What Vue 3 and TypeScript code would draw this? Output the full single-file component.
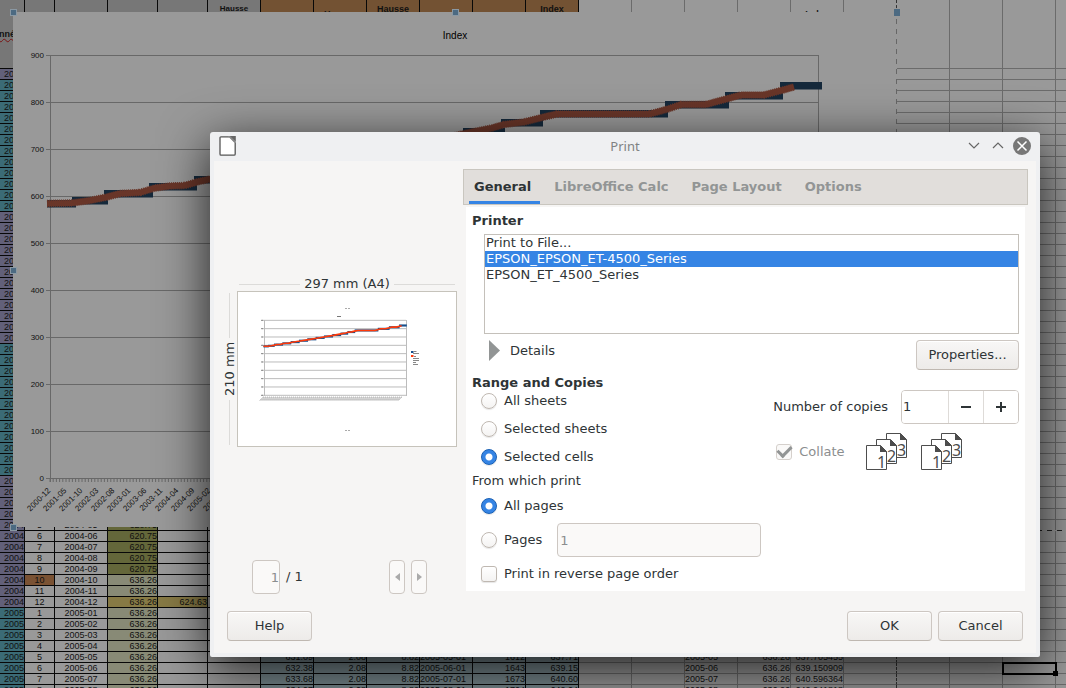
<script setup lang="ts">
import { ref } from 'vue'

interface Cell {
  text: string
  cls: string
}

const ROW_COUNT = 57
const COLUMN_COUNT = 22
const FIRST_ROW_BELOW_CHART = 41
const columnWidths = [25, 30, 53, 50, 50, ...Array(17).fill(53)]

const details: Record<number, string[]> = {
  53: ['631.09', '2.08', '8.82', '2005-05-01', '1612', '637.71', '', '', '2005-05', '636.26', '637.705455'],
  54: ['632.38', '2.08', '8.82', '2005-06-01', '1643', '639.15', '', '', '2005-06', '636.26', '639.150909'],
  55: ['633.68', '2.08', '8.82', '2005-07-01', '1673', '640.60', '', '', '2005-07', '636.26', '640.596364'],
  56: ['634.97', '2.08', '8.82', '2005-08-01', '1704', '642.04', '', '', '2005-08', '636.26', '642.041818'],
}

function buildCell(row: number, col: number): Cell {
  const absolute = 2000 * 12 + 11 + row
  const year = Math.floor(absolute / 12)
  const month = (absolute % 12) + 1
  const edge = col < 12 ? 'ruled' : col === 17 ? 'page-end' : ''
  let text = ''
  let cls = ''
  if (col === 0) {
    text = String(year)
    cls = year % 2 ? 'teal' : 'violet'
  } else if (col === 1) {
    text = String(month)
    cls = row === 46 ? 'center brown' : 'center'
  } else if (col === 2) {
    text = `${year}-${String(month).padStart(2, '0')}`
    cls = 'center'
  } else if (col === 3) {
    text = row > 45 ? '636.26' : '620.75'
    cls = row === 48 ? 'gold' : row > 45 ? 'sage' : 'olive'
  } else if (col === 4 && row === 48) {
    text = '624.63'
    cls = 'gold'
  } else if (col > 5) {
    text = details[row]?.[col - 6] ?? ''
    cls = col < 12 ? 'slate' : ''
    if (col === 9 || col === 14) cls += ' left'
    if (row === 54 && col === 20) cls = 'cursor'
  }
  if (col > 0 && row < FIRST_ROW_BELOW_CHART) text = ''
  return { text, cls: `${edge} ${cls}` }
}

const rows: Cell[][] = Array.from({ length: ROW_COUNT }, (_, r) =>
  Array.from({ length: COLUMN_COUNT }, (_, c) => buildCell(r, c)),
)

const headings: Record<number, string> = { 0: 'Année', 5: 'Hausse', 7: 'Hausse', 8: 'Hausse', 11: 'Index', 16: 'Index' }
const headerCells: Cell[] = Array.from({ length: COLUMN_COUNT }, (_, c) => ({
  text: headings[c] ?? '',
  cls: [
    c < 12 ? 'ruled' : c === 17 ? 'page-end' : '',
    c < 6 ? 'gray' : c < 12 ? 'copper' : '',
    c === 0 ? 'low' : '',
    c === 7 || c === 16 ? 'drop' : '',
    c === 5 ? 'small' : '',
  ].join(' '),
}))

const levels = Array.from({ length: 10 }, (_, i) => ({ value: i * 100, y: 478 - i * 47 }))
const ticks = Array.from({ length: 241 }, (_, i) => 50 + i * 3.2)
const months = Array.from({ length: 12 }, (_, i) => {
  const m = 2000 * 12 + 11 + i * 5
  return { x: 51 + i * 16, text: `${Math.floor(m / 12)}-${String((m % 12) + 1).padStart(2, '0')}` }
})

const steps: [number, number, number][] = [
  [47, 76, 204], [72, 108, 201], [104, 153, 194], [149, 197, 187], [194, 243, 180],
  [239, 288, 172], [284, 333, 164], [329, 378, 156], [374, 423, 148], [419, 467, 140],
  [463, 505, 132], [501, 543, 123], [540, 668, 114], [665, 729, 105], [725, 783, 96], [780, 822, 86],
]
const trend =
  'M47 203.5 L72 203 L90 200.5 L107 197 L120 193.5 L140 192.5 L155 188 L170 186 L185 185.5 L197 182 L210 179 L245 174 L290 166 L335 158 L380 150 L425 142 L472 132 L492 128 L504 124.500 L524 122 L546 116.500 L557 114 L650 114 L668 109 L681 104.500 L706 104.500 L728 98.500 L741 95 L764 95 L783 90 L794 87'

const tabs = ['General', 'LibreOffice Calc', 'Page Layout', 'Options']
const activeTab = ref('General')
const printers = ['Print to File...', 'EPSON_EPSON_ET-4500_Series', 'EPSON_ET_4500_Series']
const printer = ref(printers[1])
const range = ref('cells')
const pages = ref('all')
const reverse = ref(false)
const copies = ref(1)
const collateIcons = [0, 1]
const sheets = [
  { x: 20, y: 0, n: 3 },
  { x: 10, y: 6, n: 2 },
  { x: 0, y: 12, n: 1 },
]
</script>

<template>
  <div class="desktop">
    <div class="sheet">
      <table class="grid">
        <colgroup>
          <col v-for="(w, i) in columnWidths" :key="i" :style="{ width: w + 'px' }" />
        </colgroup>
        <thead>
          <tr>
            <th v-for="(h, i) in headerCells" :key="i" :class="h.cls"><span>{{ h.text }}</span></th>
          </tr>
        </thead>
        <tbody>
          <tr v-for="(row, r) in rows" :key="r">
            <td v-for="(cell, c) in row" :key="c" :class="cell.cls">{{ cell.text }}</td>
          </tr>
        </tbody>
      </table>
      <div class="break-row"></div>
      <svg class="chart" width="892" height="524" viewBox="9 8 892 524">
        <rect x="13" y="12" width="884" height="515" fill="#999" />
        <text x="455" y="39" class="chart-title">Index</text>
        <g stroke="#686868">
          <line v-for="l in levels" :key="l.value" x1="46" x2="818" :y1="l.y + 0.5" :y2="l.y + 0.5" />
          <line x1="50.500" x2="50.500" y1="55" y2="482" />
          <line x1="818.500" x2="818.500" y1="55" y2="478" />
          <line v-for="t in ticks" :key="t" :x1="t" :x2="t" y1="478" y2="482" />
        </g>
        <text v-for="l in levels" :key="l.value" x="44" :y="l.y + 3" class="level">{{ l.value }}</text>
        <text
          v-for="m in months"
          :key="m.text"
          class="level"
          :transform="`translate(${m.x} 491) rotate(-45)`"
        >{{ m.text }}</text>
        <rect v-for="s in steps" :key="s[0]" :x="s[0]" :y="s[2] - 4" :width="s[1] - s[0]" height="7.500" fill="#15293b" />
        <path :d="trend" fill="none" stroke="#693629" stroke-width="6" />
        <path :d="trend" fill="none" stroke="#693629" stroke-width="7.500" stroke-dasharray="1 1" />
        <line x1="896.500" x2="896.500" y1="19" y2="527" stroke="#666" stroke-dasharray="5 5" />
        <g fill="#4c6a82" stroke="#8a98a3">
          <rect x="10.500" y="9.500" width="6" height="6" />
          <rect x="452.500" y="9.500" width="6" height="6" />
          <rect x="894" y="9" width="6" height="7" stroke="none" />
          <rect x="10.500" y="267.500" width="6" height="6" />
          <rect x="10.500" y="524.500" width="6" height="6" />
        </g>
      </svg>
    </div>

    <section class="dialog" role="dialog" aria-label="Print">
      <header class="titlebar">
        <svg width="18" height="20" viewBox="0 0 18 20">
          <path d="M1 2 Q1 .8 2 .8 H10.500 L16.200 6.500 V18 Q16.200 19.200 15 19.200 H2 Q1 19.200 1 18Z" fill="#fff" stroke="#555" stroke-width="1.300" />
          <path d="M10.500 0 H16.800 V6Z" fill="#666" />
          <path d="M10 .5 L16.500 7" stroke="#aaa" />
        </svg>
        <h1>Print</h1>
        <div class="window-buttons">
          <button aria-label="Minimize"><svg width="12" height="8" viewBox="0 0 12 8"><path d="M1 1 L6 6 L11 1" /></svg></button>
          <button aria-label="Maximize"><svg width="12" height="8" viewBox="0 0 12 8"><path d="M1 6 L6 1 L11 6" /></svg></button>
          <button aria-label="Close">
            <svg width="18" height="18" viewBox="0 0 18 18"><circle cx="9" cy="9" r="9" fill="#777" /><path class="cross" d="M4.500 4.500 L13.500 13.500 M13.500 4.500 L4.500 13.500" /></svg>
          </button>
        </div>
      </header>

      <div class="body">
        <div class="main">
          <aside class="preview-pane">
            <div class="preview">
              <div class="measure across"><i></i><span>297 mm (A4)</span><i></i></div>
              <div class="measure down"><i></i><span>210 mm</span><i></i></div>
              <svg class="paper" viewBox="238 292 218 154">
                <g stroke="#bcbcbc">
                  <line v-for="i in 10" :key="i" x1="262" x2="406" :y1="312 + i * 8.33" :y2="312 + i * 8.33" />
                  <line x1="264.500" x2="264.500" y1="320" y2="396" />
                  <line x1="406.500" x2="406.500" y1="320" y2="396" />
                </g>
                <line v-for="i in 10" :key="i" x1="261" x2="263" :y1="312 + i * 8.33" :y2="312 + i * 8.33" stroke="#888" />
                <g transform="translate(264 320) scale(.185 .177) translate(-50 -55)">
                  <rect v-for="s in steps" :key="s[0]" :x="s[0]" :y="s[2] - 6" :width="s[1] - s[0]" height="12" fill="#164f8c" />
                  <path :d="trend" fill="none" stroke="#ff3a0a" stroke-width="9" />
                </g>
                <path v-for="i in 35" :key="i" :d="`M${256 + i * 4} 400.500 l4 -4 m-2 4 l4 -4`" stroke="#666" stroke-width=".8" stroke-dasharray="2 .5" />
                <path d="M345 308.500 h5 M345 430.500 h5" stroke="#aaa" stroke-width="1" stroke-dasharray="2 1" />
                <path d="M337 316.500 h4" stroke="#777" />
                <path d="M411 352 h2.500" stroke="#164f8c" stroke-width="2" />
                <path d="M411 356 h2.500" stroke="#ff3a0a" stroke-width="2" />
                <path d="M413.500 351.500 h3 M413 353.500 h6 M414 356.500 h2 M413 358.500 h6 M413 360.500 h6 M413 362.500 h3 M413 364.500 h5" stroke="#888" />
              </svg>
            </div>
            <div class="pager">
              <input type="text" value="1" aria-label="Current page" disabled />
              <span>/ 1</span>
              <div class="pager-buttons">
                <button disabled aria-label="Previous page"><svg width="5" height="8" viewBox="0 0 5 8"><path d="M5 0 V8 L0 4Z" /></svg></button>
                <button disabled aria-label="Next page"><svg width="5" height="8" viewBox="0 0 5 8"><path d="M0 0 V8 L5 4Z" /></svg></button>
              </div>
            </div>
          </aside>

          <div class="notebook">
            <nav role="tablist">
              <button
                v-for="tab in tabs"
                :key="tab"
                role="tab"
                :aria-selected="activeTab === tab"
                :class="{ active: activeTab === tab }"
                @click="activeTab = tab"
              >{{ tab }}</button>
            </nav>
            <div class="page" role="tabpanel">
              <h2>Printer</h2>
              <select v-model="printer" size="6" aria-label="Printer">
                <option v-for="p in printers" :key="p" :value="p">{{ p }}</option>
              </select>
              <div class="details-row">
                <button class="expander"><svg width="11" height="21" viewBox="0 0 11 21"><path d="M0 0 V21 L11 10.500Z" fill="#929595" /></svg>Details</button>
                <button class="push properties">Properties...</button>
              </div>
              <h2 class="range-title">Range and Copies</h2>
              <div class="columns">
                <div class="choices">
                  <label><input v-model="range" type="radio" value="all" />All sheets</label>
                  <label><input v-model="range" type="radio" value="sheets" />Selected sheets</label>
                  <label><input v-model="range" type="radio" value="cells" />Selected cells</label>
                  <p>From which print</p>
                  <label><input v-model="pages" type="radio" value="all" />All pages</label>
                  <div class="pages-row">
                    <label><input v-model="pages" type="radio" value="some" />Pages</label>
                    <input class="entry" type="text" value="1" aria-label="Page range" disabled />
                  </div>
                  <label><input v-model="reverse" type="checkbox" />Print in reverse page order</label>
                </div>
                <div class="copies">
                  <div class="copies-row">
                    <label for="copies">Number of copies</label>
                    <div class="spin">
                      <input id="copies" v-model="copies" type="text" />
                      <button aria-label="Fewer" @click="copies = Math.max(1, copies - 1)"><svg width="10" height="10" viewBox="0 0 10 10"><path d="M0 5 H10" /></svg></button>
                      <button aria-label="More" @click="copies++"><svg width="10" height="10" viewBox="0 0 10 10"><path d="M0 5 H10 M5 0 V10" /></svg></button>
                    </div>
                  </div>
                  <div class="collate-row">
                    <label class="muted"><input type="checkbox" checked disabled />Collate</label>
                    <svg v-for="i in collateIcons" :key="i" width="42" height="38" viewBox="0 0 42 38">
                      <g v-for="s in sheets" :key="s.n" :transform="`translate(${s.x} ${s.y})`">
                        <path d="M.5 .5 H14.500 L20.500 6.500 V24.500 H.5Z" fill="#fff" stroke="#4d4d4d" />
                        <path d="M14 0 V7 H21Z" fill="#4d4d4d" />
                        <text x="11" y="23">{{ s.n }}</text>
                      </g>
                    </svg>
                  </div>
                </div>
              </div>
            </div>
          </div>
        </div>

        <footer>
          <button class="push">Help</button>
          <span class="spacer"></span>
          <button class="push">OK</button>
          <button class="push">Cancel</button>
        </footer>
      </div>
    </section>
  </div>
</template>

<style>
body {
  margin: 0;
}
</style>

<style scoped>
* {
  box-sizing: border-box;
}
.desktop {
  position: relative;
  min-height: 100vh;
  overflow: hidden;
  background: #999;
  font: 13px/20px "DejaVu Sans", sans-serif;
  color: #2e3436;
}
button,
input,
select {
  font: inherit;
  color: inherit;
  margin: 0;
  padding: 0;
}

.sheet {
  position: absolute;
  inset: 0;
  overflow: hidden;
  font-family: "Liberation Sans", Arial, sans-serif;
  color: #111;
}
.grid {
  width: 1109px;
  table-layout: fixed;
  border-collapse: separate;
  border-spacing: 0;
  font-size: 9px;
}
.grid th,
.grid td {
  padding: 0;
  white-space: nowrap;
  border-right: 1px solid #6b6b6b;
  border-bottom: 1px solid #6b6b6b;
}
.grid th {
  height: 69px;
  padding-top: 3px;
  vertical-align: top;
  line-height: 12px;
}
.grid td {
  height: 11px;
  line-height: 10px;
  text-align: right;
}
.grid .ruled {
  border-color: #080808;
}
.grid .page-end {
  border-right-style: dashed;
  border-right-color: #333;
}
.grid .gray {
  background: #777;
}
.grid .copper {
  background: #735233;
}
.grid .small {
  font-size: 8px;
}
.grid .drop {
  padding-top: 8px;
}
.grid .low {
  padding-top: 28px;
}
.grid .low span {
  display: flex;
  justify-content: flex-end;
  padding-right: 4px;
  text-decoration: underline wavy #7a1414 1px;
}
.grid .center {
  text-align: center;
}
.grid .left {
  text-align: left;
}
.grid .teal {
  background: #3b6b76;
}
.grid .violet {
  background: #626079;
}
.grid .brown {
  background: #7a5233;
}
.grid .olive {
  background: #64673a;
}
.grid .sage {
  background: #888a76;
}
.grid .gold {
  background: #877a45;
}
.grid .slate {
  background: #78898e;
}
.grid .cursor {
  position: relative;
  outline: 2px solid #000;
  outline-offset: -1px;
}
.grid .cursor::after {
  content: "";
  position: absolute;
  right: -3px;
  bottom: -3px;
  width: 5px;
  height: 5px;
  background: #000;
}
.break-row {
  position: absolute;
  top: 530px;
  left: 897px;
  right: 0;
  height: 1px;
  background: repeating-linear-gradient(90deg, #222 0 5px, #999 5px 10px);
}
.chart {
  position: absolute;
  left: 9px;
  top: 8px;
}
.chart-title {
  font-size: 10px;
  text-anchor: middle;
  fill: #000;
}
.level {
  font-size: 8px;
  text-anchor: end;
  fill: #111;
}

.dialog {
  position: absolute;
  top: 132px;
  left: 210px;
  right: 26px;
  padding: 0 4px 4px;
  background: #eff0f2;
  border-radius: 3px 3px 2px 2px;
  box-shadow: 0 12px 50px rgba(0, 0, 0, 0.8);
}
.titlebar {
  display: grid;
  grid-template-columns: 80px 1fr 80px;
  align-items: center;
  height: 29px;
  padding: 0 5px 2px;
}
.titlebar h1 {
  margin: 0;
  text-align: center;
  font: 13px/20px "Noto Sans", sans-serif;
  color: #7f8283;
}
.window-buttons {
  display: flex;
  align-items: center;
  justify-content: flex-end;
  gap: 6px;
}
.window-buttons button {
  display: grid;
  place-items: center;
  width: 18px;
  height: 18px;
  border: 0;
  background: none;
}
.window-buttons path {
  fill: none;
  stroke: #666;
  stroke-width: 1.2;
}
.window-buttons .cross {
  stroke: #fff;
  stroke-width: 1.5;
}
.body {
  background: #f6f5f4;
}
.main {
  display: flex;
}

.preview-pane {
  display: flex;
  flex-direction: column;
  justify-content: space-between;
  width: 249px;
  padding-top: 116px;
}
.preview {
  display: grid;
  grid-template-columns: 14px 220px;
  grid-template-rows: 14px 156px;
  padding-left: 9px;
}
.measure {
  display: flex;
  align-items: center;
  gap: 4px;
  line-height: 14px;
}
.measure i {
  flex: 1;
  background: #dcdbd9;
}
.across {
  grid-column: 2;
  padding: 0 2px;
}
.across i {
  height: 1px;
}
.down {
  writing-mode: vertical-rl;
  transform: rotate(180deg);
  padding: 2px 0;
}
.down i {
  width: 1px;
}
.paper {
  width: 100%;
  height: 100%;
  background: #fff;
  border: 1px solid #c6c3bb;
}
.pager {
  display: flex;
  align-items: center;
  gap: 6px;
  height: 34px;
  padding: 0 36px 0 38px;
}
.pager input {
  width: 28px;
  height: 34px;
  text-align: right;
  color: #8b8e8f;
  background: #faf9f8;
  border: 1px solid #cdc7c2;
  border-radius: 4px;
}
.pager-buttons {
  display: flex;
  gap: 6px;
  margin-left: auto;
}
.pager-buttons button {
  display: grid;
  place-items: center;
  width: 16px;
  height: 34px;
  background: #faf9f8;
  border: 1px solid #cdc7c2;
  border-radius: 4px;
}
.pager-buttons path {
  fill: #aaa;
}

.notebook {
  flex: 1;
  margin: 8px 8px 3px 0;
}
nav {
  display: flex;
  height: 36px;
  padding: 0 5px;
  background: #e1dedb;
  border: 1px solid #c9c6bf;
}
nav button {
  padding: 3px 9px 0 5px;
  margin-right: 9px;
  border: 0;
  border-bottom: 3px solid transparent;
  background: none;
  font-weight: bold;
  color: #929595;
}
nav button.active {
  padding-top: 2px;
  color: #2e3436;
  border-color: #3584e4;
}
.page {
  display: flex;
  flex-direction: column;
  margin: 2px 3px 0;
  padding: 4px 6px 7px;
  background: #fff;
}
h2 {
  margin: 0;
  font-size: 13px;
  line-height: 20px;
}
select {
  height: 100px;
  margin: 3px 0 0 12px;
  overflow: hidden;
  background: #fff;
  border: 1px solid #c4c0ba;
  border-radius: 0;
  outline: 0;
}
option {
  height: 16px;
  min-height: 16px;
  padding: 0 1px;
  line-height: 16px;
}
option:checked {
  background: linear-gradient(#3584e4, #3584e4);
  -webkit-text-fill-color: #fff;
}
.details-row {
  display: flex;
  align-items: flex-start;
  justify-content: space-between;
  margin: 6px 0 0 17px;
}
.expander {
  display: flex;
  align-items: center;
  gap: 10px;
  height: 21px;
  border: 0;
  background: none;
}
.push {
  width: 85px;
  height: 30px;
  border: 1px solid #cdc7c2;
  border-bottom-color: #bfb8b1;
  border-radius: 4px;
  background: linear-gradient(#f8f7f6, #edebe9);
  box-shadow: inset 0 1px #fff;
}
.properties {
  width: 103px;
}
.range-title {
  margin-top: 5px;
  line-height: 15px;
}
.columns {
  display: flex;
  justify-content: space-between;
}
label {
  display: flex;
  align-items: center;
}
.choices {
  padding-top: 1px;
}
.choices > label,
.pages-row label {
  height: 20px;
  padding-left: 9px;
}
.choices > label + label {
  margin-top: 8px;
}
.choices p {
  margin: 4px 0 5px;
}
.pages-row {
  display: flex;
  align-items: center;
  gap: 15px;
  margin: 7px 0;
}
input[type="radio"],
input[type="checkbox"] {
  appearance: none;
  flex: none;
  width: 16px;
  height: 16px;
  margin-right: 7px;
  border: 1px solid #bfb8b1;
  border-radius: 50%;
  background: linear-gradient(#fff, #f4f3f2);
  box-shadow: 0 1px 1px rgba(0, 0, 0, 0.1);
}
input[type="checkbox"] {
  border-radius: 3px;
}
input[type="radio"]:checked {
  border-color: #185fb4;
  background: radial-gradient(circle, #fff 3px, #3584e4 4px);
}
.collate-row input[type="checkbox"] {
  border-color: #d5d0cc;
  background: #faf9f8;
  display: grid;
  place-items: center;
  box-shadow: none;
}
.collate-row input[type="checkbox"]::after {
  content: "";
  width: 6px;
  height: 11px;
  border: solid #929595;
  border-width: 0 3px 3px 0;
  transform: translateY(-2px) rotate(45deg);
}
.entry {
  width: 204px;
  height: 34px;
  padding: 0 2px;
  color: #8b8e8f;
  background: #faf9f8;
  border: 1px solid #cdc7c2;
  border-radius: 4px;
}
.copies-row {
  display: flex;
  align-items: center;
  justify-content: flex-end;
  gap: 13px;
}
.spin {
  display: flex;
  width: 118px;
  height: 34px;
  border: 1px solid #cdc7c2;
  border-radius: 4px;
  overflow: hidden;
}
.spin input {
  flex: 1;
  min-width: 0;
  padding: 0 1px;
  border: 0;
  background: #fff;
  outline: 0;
}
.spin button {
  display: grid;
  place-items: center;
  width: 35px;
  border: 0;
  border-left: 1px solid #dedbd8;
  background: #fff;
}
.spin path {
  stroke: #2e3436;
  stroke-width: 2;
}
.collate-row {
  display: flex;
  align-items: center;
  gap: 13px;
  margin-top: 9px;
  padding-left: 3px;
}
.collate-row label {
  margin-right: 8px;
}
.collate-row text {
  font: 16px "Noto Sans", sans-serif;
  fill: #4d4d4d;
}
.muted {
  color: #8b8e8f;
}
footer {
  display: flex;
  gap: 6px;
  padding: 17px 13px 12px;
}
.spacer {
  flex: 1;
}
</style>
